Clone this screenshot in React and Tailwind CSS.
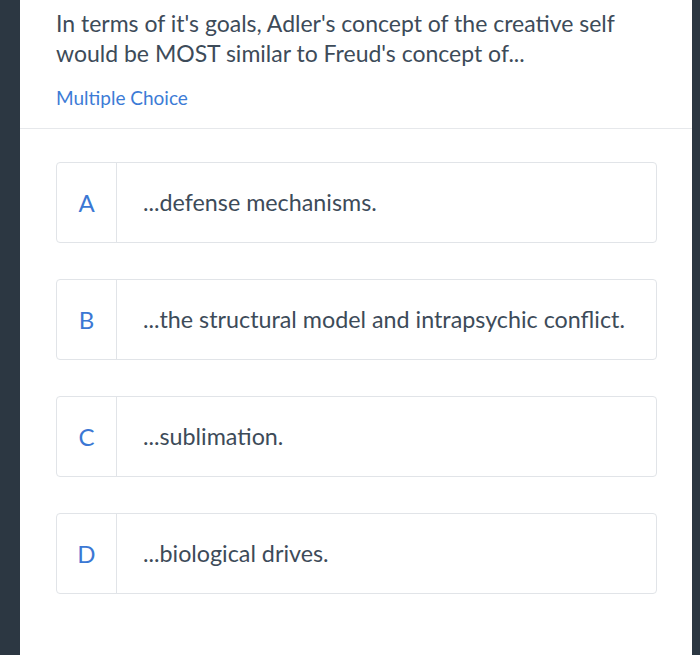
const OPTIONS = [
  { key: 'A', text: '...defense mechanisms.' },
  { key: 'B', text: '...the structural model and intrapsychic conflict.' },
  { key: 'C', text: '...sublimation.' },
  { key: 'D', text: '...biological drives.' },
];

export default function App() {
  return (
    <div className="flex h-[655px] w-[700px] bg-[#2c3742] font-['Lato','Noto_Sans',sans-serif]">
      <div className="ml-[20px] mr-[8px] flex flex-1 flex-col bg-white">
        {/* Question header */}
        <div className="border-b border-[#e6e8eb] pl-[36px] pr-[30px] pt-[8px] pb-[16px]">
          <p className="text-[23px] leading-[30px] text-[#3d4b59]">
            In terms of it's goals, Adler's concept of the creative self would be MOST similar to Freud's concept of...
          </p>
          <p className="mt-[16px] text-[19px] leading-[28px] text-[#3c7bd6]">Multiple Choice</p>
        </div>

        {/* Answers */}
        <div className="flex flex-col gap-[36px] pl-[36px] pr-[35px] pt-[33px]">
          {OPTIONS.map((o) => (
            <div key={o.key} className="flex h-[81px] rounded-[4px] border border-[#e1e4e8]">
              <div className="flex w-[60px] items-center justify-center border-r border-[#e1e4e8] text-[24px] text-[#3b78d4]">
                {o.key}
              </div>
              <div className="flex items-center pl-[26px] text-[23.3px] text-[#3d4b59]">{o.text}</div>
            </div>
          ))}
        </div>
      </div>
    </div>
  );
}
